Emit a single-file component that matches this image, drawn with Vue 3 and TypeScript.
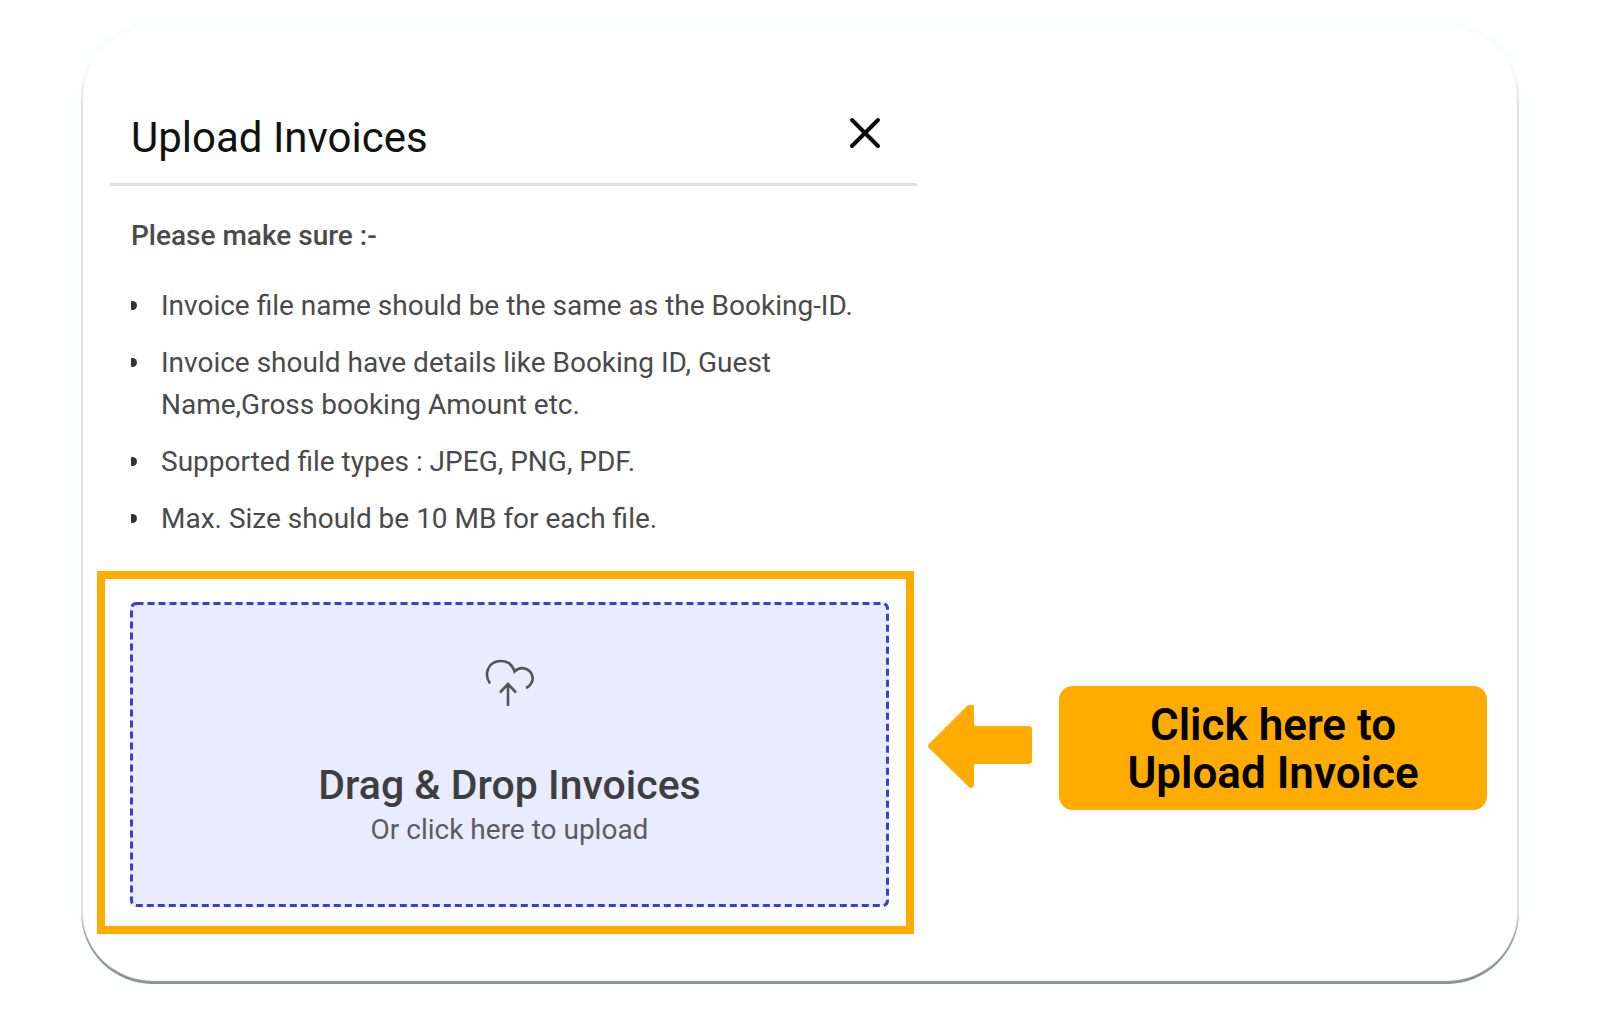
<script setup lang="ts">
import { ref } from 'vue'

const rules: string[] = [
  'Invoice file name should be the same as the Booking-ID.',
  'Invoice should have details like Booking ID, Guest Name,Gross booking Amount etc.',
  'Supported file types : JPEG, PNG, PDF.',
  'Max. Size should be 10 MB for each file.',
]

const files = ref<File[]>([])

function addFiles(list: FileList | null | undefined): void {
  if (list) files.value = [...files.value, ...Array.from(list)]
}

function onChange(event: Event): void {
  addFiles((event.target as HTMLInputElement).files)
}

function onDrop(event: DragEvent): void {
  addFiles(event.dataTransfer?.files)
}
</script>

<template>
  <main class="card">
    <section class="details">
      <header class="head">
        <h1 class="title">Upload Invoices</h1>
        <button class="close" type="button" aria-label="Close">
          <svg width="32" height="32" viewBox="0 0 32 32" aria-hidden="true">
            <path d="M3 3L29 29M29 3L3 29" fill="none" stroke="#0c0c0c" stroke-width="4" stroke-linecap="round" />
          </svg>
        </button>
      </header>
      <div class="notes">
        <h2 class="lead">Please make sure :-</h2>
        <ul class="rules">
          <li v-for="rule in rules" :key="rule" class="rule">{{ rule }}</li>
        </ul>
      </div>
    </section>

    <div class="frame">
      <label class="drop" @dragover.prevent @drop.prevent="onDrop">
        <input class="file" type="file" multiple accept=".jpeg,.jpg,.png,.pdf" @change="onChange" />
        <svg class="outline" aria-hidden="true">
          <rect class="dash" x="1.5" y="1.5" rx="5" />
        </svg>
        <svg class="cloud" width="50" height="48" viewBox="0 0 50 48" fill="none" stroke="#555558" stroke-width="2.6" aria-hidden="true">
          <path d="M5 25.500C-1 17 2 4 15 3C22 2.500 27 6 29.500 13.500C35 8 44 9.500 47 17C49 22 46 28 41 30" />
          <path d="M23 48V26M15 34.500L23 26L31 34.500" />
        </svg>
        <span class="drop-title">Drag &amp; Drop Invoices</span>
        <span class="drop-text">Or click here to upload</span>
      </label>
    </div>

    <aside class="hint">
      <svg class="arrow" width="104" height="83" viewBox="0 0 104 83" aria-hidden="true">
        <path d="M1 39L39 1Q40 0 42 0H45Q46 0 46 1V19Q46 21 48 21H100Q104 21 104 24V56Q104 59 100 59H48Q46 59 46 61V79Q46 82 43 83Q41 83 40 81L1 43Q-1 41 1 39Z" fill="#ffab00" />
      </svg>
      <p class="callout">Click here to<br />Upload Invoice</p>
    </aside>
  </main>
</template>

<style>
body {
  margin: 0;
  background: #fefefe;
}
</style>

<style scoped>
.card {
  display: grid;
  grid-template-columns: minmax(0, 817fr) minmax(0, 559fr);
  column-gap: 14px;
  box-sizing: border-box;
  margin: 26px 81px 30px;
  padding: 72px 32px 50px 16px;
  border-radius: 72px;
  background: #fefefe;
  box-shadow:
    inset 0 6px 2px #fefefe,
    inset 0 -3px 1px #909090,
    inset 2px 0 1px #e0e0e0,
    inset -2px 0 1px #e0e0e0,
    0 0 8px 4px #fbfefd;
  font-family: Roboto, "Liberation Sans", sans-serif;
  color: #4a4a4a;
}

.details {
  grid-column: 1;
}

.head {
  display: flex;
  align-items: center;
  justify-content: space-between;
  box-sizing: border-box;
  height: 88px;
  margin: 0 -3px 0 13px;
  padding: 0 36px 6px 21px;
  border-bottom: 3px solid #e0e0e0;
}

.title {
  margin: 0;
  font-size: 42px;
  line-height: 48px;
  font-weight: 400;
  color: #111;
}

.close {
  display: flex;
  margin: 0 0 10px;
  padding: 0;
  border: 0;
  background: none;
  cursor: pointer;
}

.notes {
  padding: 29px 32px 31px 34px;
}

.lead {
  margin: 0 0 28px;
  font-size: 28px;
  line-height: 42px;
  font-weight: 500;
}

.rules {
  display: flex;
  flex-direction: column;
  gap: 15px;
  margin: 0;
  padding: 0;
  list-style: none;
}

.rule {
  position: relative;
  padding-left: 30px;
  font-size: 28px;
  line-height: 42px;
}

.rule::before {
  content: "";
  position: absolute;
  left: 0;
  top: 16px;
  width: 6px;
  height: 9px;
  border-radius: 1px 5px 5px 1px;
  background: #333;
}

.frame {
  grid-column: 1;
  padding: 23px 17px 19px 25px;
  border: 8px solid #ffab00;
}

.drop {
  display: flex;
  flex-direction: column;
  align-items: center;
  position: relative;
  padding: 56px 24px 58px;
  border-radius: 6px;
  background: #e9ebff;
  cursor: pointer;
}

.file {
  position: absolute;
  width: 1px;
  height: 1px;
  opacity: 0;
}

.outline {
  position: absolute;
  inset: 0;
  width: 100%;
  height: 100%;
}

.dash {
  width: calc(100% - 3px);
  height: calc(100% - 3px);
  fill: none;
  stroke: #3a3fd0;
  stroke-width: 3px;
  stroke-dasharray: 7 4;
}

.cloud {
  margin-bottom: 54px;
}

.drop-title {
  font-size: 41px;
  line-height: 50px;
  font-weight: 500;
  color: #3e3e40;
}

.drop-text {
  padding-top: 1px;
  font-size: 28px;
  line-height: 38px;
  color: #5c5c60;
}

.hint {
  grid-column: 2;
  display: flex;
  align-items: center;
  gap: 27px;
  padding-bottom: 10px;
}

.arrow {
  flex: none;
  margin-bottom: 2px;
}

.callout {
  flex: 1;
  margin: 0;
  padding: 15px 12px 13px;
  border-radius: 14px;
  background: #ffab00;
  font-size: 44px;
  line-height: 48px;
  font-weight: 600;
  text-align: center;
  color: #000;
}
</style>
